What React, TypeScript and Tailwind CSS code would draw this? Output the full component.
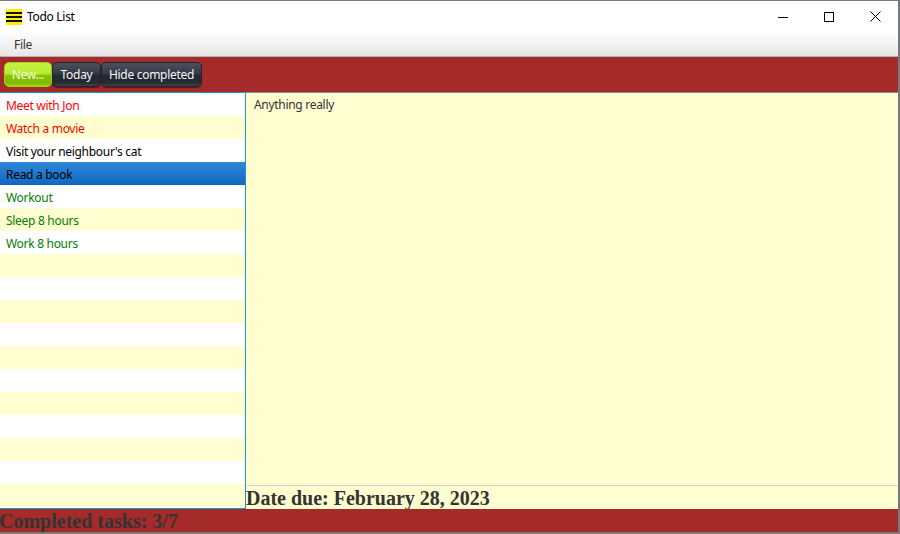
const tasks = [
  { label: 'Meet with Jon', color: 'text-[#ff0000]' },
  { label: 'Watch a movie', color: 'text-[#ff0000]' },
  { label: "Visit your neighbour's cat", color: 'text-black' },
  { label: 'Read a book', color: 'text-black' },
  { label: 'Workout', color: 'text-[#008000]' },
  { label: 'Sleep 8 hours', color: 'text-[#008000]' },
  { label: 'Work 8 hours', color: 'text-[#008000]' },
];

const EMPTY_ROWS = 11;

function ToolbarButton({ children, width }: { children: string; width: string }) {
  return (
    <button
      className={`${width} h-[25px] pt-px rounded-[5px] border border-[#22252b] bg-[linear-gradient(to_bottom,#4b515d_0%,#363b45_45%,#23272e_55%,#262a31_85%,#3d434d_100%)] shadow-[0_1px_1px_rgba(0,0,0,0.45)] text-[#f4f6fa] text-[12px] tracking-[-0.3px]`}
    >
      {children}
    </button>
  );
}

export default function App() {
  return (
    <div className="w-[900px] h-[534px] flex flex-col overflow-hidden bg-white border-t border-r-2 border-b-2 border-[#77797c] font-['Noto_Sans',sans-serif] text-[12px] leading-none tracking-[-0.3px]">
      <div className="h-[31px] flex items-center bg-white shrink-0">
        <svg width="16" height="16" viewBox="0 0 16 16" className="ml-[6px] mr-[5px]">
          <rect width="16" height="16" fill="#ffee00" />
          <rect y="3" width="16" height="2" fill="#111" />
          <rect y="7" width="16" height="2" fill="#111" />
          <rect y="11" width="16" height="2" fill="#111" />
        </svg>
        <span className="text-black">Todo List</span>
        <div className="ml-auto flex items-center">
          <div className="w-[46px] h-[30px] flex items-center justify-center">
            <svg width="10" height="10" viewBox="0 0 10 10">
              <path d="M0 5.5H10" stroke="#000" />
            </svg>
          </div>
          <div className="w-[46px] h-[30px] flex items-center justify-center">
            <svg width="10" height="10" viewBox="0 0 10 10">
              <rect x="0.5" y="0.5" width="9" height="9" fill="none" stroke="#000" />
            </svg>
          </div>
          <div className="w-[46px] h-[30px] flex items-center justify-center">
            <svg width="11" height="11" viewBox="0 0 11 11">
              <path d="M0.5 0.5L10.5 10.5M10.5 0.5L0.5 10.5" stroke="#000" />
            </svg>
          </div>
        </div>
      </div>

      <div className="h-[25px] flex items-center pl-[14px] pt-[2px] shrink-0 bg-gradient-to-b from-white to-[#e6e6e6] border-b border-[#b4b4b4] text-[#333]">
        File
      </div>

      <div className="h-[35px] flex items-center pl-1 shrink-0 bg-[#a52a2a]">
        <button className="w-[48px] h-[25px] pt-px rounded-[5px] border border-[#9fd41f] bg-[linear-gradient(to_bottom,#c2f23e_0%,#b8ec33_48%,#8ac600_52%,#7fb800_85%,#9ad60f_100%)] text-[#f6f8e8] text-[12px] tracking-[-0.3px]">
          New...
        </button>
        <ToolbarButton width="w-[49px]">Today</ToolbarButton>
        <ToolbarButton width="w-[101px]">Hide completed</ToolbarButton>
      </div>

      <div className="flex-1 min-h-0 flex">
        <div className="w-[246px] shrink-0 flex flex-col overflow-hidden border-t border-r border-b border-[#1b95c9] bg-white">
          {tasks.map((task, i) => (
            <div
              key={task.label}
              className={`h-[23px] shrink-0 flex items-center pl-[6px] pt-[2px] ${task.color} ${
                i === 3 ? 'bg-gradient-to-b from-[#2f88d8] to-[#0c68bf]' : i % 2 ? 'bg-[#fffed0]' : 'bg-white'
              }`}
            >
              {task.label}
            </div>
          ))}
          {Array.from({ length: EMPTY_ROWS }, (_, i) => (
            <div key={i} className={`h-[23px] shrink-0 ${i % 2 ? 'bg-white' : 'bg-[#fffed0]'}`} />
          ))}
        </div>

        <div className="flex-1 min-w-0 flex flex-col bg-[#fffed0] border-t border-[#8a8a8a]">
          <div className="flex-1 pl-2 pt-[6px] text-[#333]">Anything really</div>
          <div className="h-px shrink-0 mx-px bg-[#d0d0d0]" />
          <div className="h-[23px] shrink-0 flex items-center font-['Liberation_Serif',serif] font-bold text-[20px] tracking-normal text-[#333]">
            Date due: February 28, 2023
          </div>
        </div>
      </div>

      <div className="h-[23px] shrink-0 flex items-center bg-[#a52a2a] font-['Liberation_Serif',serif] font-bold text-[20px] tracking-normal text-[#333]">
        <span className="-ml-px">Completed tasks: 3/7</span>
      </div>
    </div>
  );
}
